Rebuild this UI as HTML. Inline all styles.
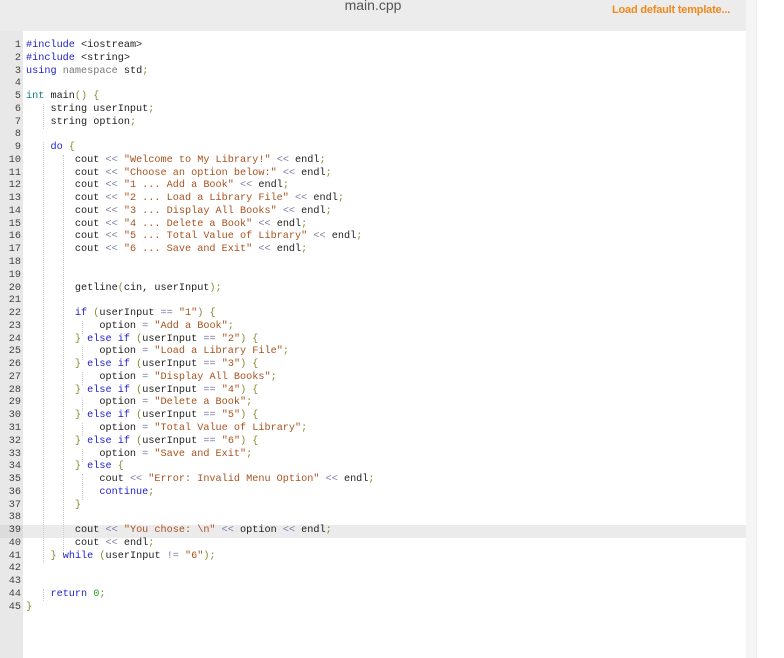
<!DOCTYPE html><html><head><style>
body{margin:0;width:784px;height:658px;background:#fff;position:relative;overflow:hidden;font-family:"Liberation Sans",sans-serif}
.hdr{position:absolute;left:0;top:0;width:746px;height:31px;background:#ececec}
.title{position:absolute;left:0;width:746px;top:-3px;text-align:center;font-size:14px;color:#555}
.load{position:absolute;left:612px;top:4px;font-size:11px;font-weight:bold;color:#f0891b;letter-spacing:-0.2px}
.rb{position:absolute;left:746px;top:0;width:10px;height:658px;background:#f5f5f5;border-right:1px solid #ececec}
.gut{position:absolute;left:0;top:31px;width:23px;height:627px;background:#e8e8e8}
.code{position:absolute;left:0;top:40px;font-family:"Liberation Mono",monospace;font-size:10.2px;line-height:12.77px;color:#222;white-space:pre}
.ln{display:inline-block;width:21px;text-align:right;color:#444;margin-right:5px}
.hl{position:absolute;left:0;top:525px;width:746px;height:12.5px;background:#ebebeb}
.hlg{position:absolute;left:0;top:525px;width:23px;height:12.5px;background:#dcdcdc}
.g{position:absolute;width:0;border-left:1px dotted #ccc}
.k{color:#2222cc}.t{color:#118080}.p{color:#8a8a30}.s{color:#a8531f}.o{color:#7a7aa8}.n{color:#22a022}.m{color:#777}
</style></head><body>
<div class="hdr"><div class="title">main.cpp</div><div class="load">Load default template...</div></div>
<div class="rb"></div>
<div class="gut"></div>
<div class="hl"></div><div class="hlg"></div>
<div class="g" style="left:43px;top:104px;height:25px"></div>
<div class="g" style="left:43px;top:142px;height:421px"></div>
<div class="g" style="left:43px;top:589px;height:12px"></div>
<div class="g" style="left:63px;top:155px;height:396px"></div>
<div class="g" style="left:82px;top:321px;height:13px"></div>
<div class="g" style="left:82px;top:347px;height:13px"></div>
<div class="g" style="left:82px;top:372px;height:13px"></div>
<div class="g" style="left:82px;top:398px;height:13px"></div>
<div class="g" style="left:82px;top:423px;height:13px"></div>
<div class="g" style="left:82px;top:449px;height:13px"></div>
<div class="g" style="left:82px;top:474px;height:26px"></div>
<div class="code"><span class="ln">1</span><span class="k">#include</span> &lt;iostream&gt;
<span class="ln">2</span><span class="k">#include</span> &lt;string&gt;
<span class="ln">3</span><span class="k">using</span> <span class="m">namespace</span> std<span class="p">;</span>
<span class="ln">4</span>
<span class="ln">5</span><span class="t">int</span> main<span class="p">() {</span>
<span class="ln">6</span>    string userInput<span class="p">;</span>
<span class="ln">7</span>    string option<span class="p">;</span>
<span class="ln">8</span>
<span class="ln">9</span>    <span class="k">do</span> <span class="p">{</span>
<span class="ln">10</span>        cout <span class="o">&lt;&lt;</span> <span class="s">"Welcome to My Library!"</span> <span class="o">&lt;&lt;</span> endl<span class="p">;</span>
<span class="ln">11</span>        cout <span class="o">&lt;&lt;</span> <span class="s">"Choose an option below:"</span> <span class="o">&lt;&lt;</span> endl<span class="p">;</span>
<span class="ln">12</span>        cout <span class="o">&lt;&lt;</span> <span class="s">"1 ... Add a Book"</span> <span class="o">&lt;&lt;</span> endl<span class="p">;</span>
<span class="ln">13</span>        cout <span class="o">&lt;&lt;</span> <span class="s">"2 ... Load a Library File"</span> <span class="o">&lt;&lt;</span> endl<span class="p">;</span>
<span class="ln">14</span>        cout <span class="o">&lt;&lt;</span> <span class="s">"3 ... Display All Books"</span> <span class="o">&lt;&lt;</span> endl<span class="p">;</span>
<span class="ln">15</span>        cout <span class="o">&lt;&lt;</span> <span class="s">"4 ... Delete a Book"</span> <span class="o">&lt;&lt;</span> endl<span class="p">;</span>
<span class="ln">16</span>        cout <span class="o">&lt;&lt;</span> <span class="s">"5 ... Total Value of Library"</span> <span class="o">&lt;&lt;</span> endl<span class="p">;</span>
<span class="ln">17</span>        cout <span class="o">&lt;&lt;</span> <span class="s">"6 ... Save and Exit"</span> <span class="o">&lt;&lt;</span> endl<span class="p">;</span>
<span class="ln">18</span>
<span class="ln">19</span>
<span class="ln">20</span>        getline<span class="p">(</span>cin, userInput<span class="p">);</span>
<span class="ln">21</span>
<span class="ln">22</span>        <span class="k">if</span> <span class="p">(</span>userInput <span class="o">==</span> <span class="s">"1"</span><span class="p">) {</span>
<span class="ln">23</span>            option <span class="o">=</span> <span class="s">"Add a Book"</span><span class="p">;</span>
<span class="ln">24</span>        <span class="p">}</span> <span class="k">else if</span> <span class="p">(</span>userInput <span class="o">==</span> <span class="s">"2"</span><span class="p">) {</span>
<span class="ln">25</span>            option <span class="o">=</span> <span class="s">"Load a Library File"</span><span class="p">;</span>
<span class="ln">26</span>        <span class="p">}</span> <span class="k">else if</span> <span class="p">(</span>userInput <span class="o">==</span> <span class="s">"3"</span><span class="p">) {</span>
<span class="ln">27</span>            option <span class="o">=</span> <span class="s">"Display All Books"</span><span class="p">;</span>
<span class="ln">28</span>        <span class="p">}</span> <span class="k">else if</span> <span class="p">(</span>userInput <span class="o">==</span> <span class="s">"4"</span><span class="p">) {</span>
<span class="ln">29</span>            option <span class="o">=</span> <span class="s">"Delete a Book"</span><span class="p">;</span>
<span class="ln">30</span>        <span class="p">}</span> <span class="k">else if</span> <span class="p">(</span>userInput <span class="o">==</span> <span class="s">"5"</span><span class="p">) {</span>
<span class="ln">31</span>            option <span class="o">=</span> <span class="s">"Total Value of Library"</span><span class="p">;</span>
<span class="ln">32</span>        <span class="p">}</span> <span class="k">else if</span> <span class="p">(</span>userInput <span class="o">==</span> <span class="s">"6"</span><span class="p">) {</span>
<span class="ln">33</span>            option <span class="o">=</span> <span class="s">"Save and Exit"</span><span class="p">;</span>
<span class="ln">34</span>        <span class="p">}</span> <span class="k">else</span> <span class="p">{</span>
<span class="ln">35</span>            cout <span class="o">&lt;&lt;</span> <span class="s">"Error: Invalid Menu Option"</span> <span class="o">&lt;&lt;</span> endl<span class="p">;</span>
<span class="ln">36</span>            <span class="k">continue</span><span class="p">;</span>
<span class="ln">37</span>        <span class="p">}</span>
<span class="ln">38</span>
<span class="ln">39</span>        cout <span class="o">&lt;&lt;</span> <span class="s">"You chose: \n"</span> <span class="o">&lt;&lt;</span> option <span class="o">&lt;&lt;</span> endl<span class="p">;</span>
<span class="ln">40</span>        cout <span class="o">&lt;&lt;</span> endl<span class="p">;</span>
<span class="ln">41</span>    <span class="p">}</span> <span class="k">while</span> <span class="p">(</span>userInput <span class="o">!=</span> <span class="s">"6"</span><span class="p">);</span>
<span class="ln">42</span>
<span class="ln">43</span>
<span class="ln">44</span>    <span class="k">return</span> <span class="n">0</span><span class="p">;</span>
<span class="ln">45</span><span class="p">}</span>
</div>
</body></html>
